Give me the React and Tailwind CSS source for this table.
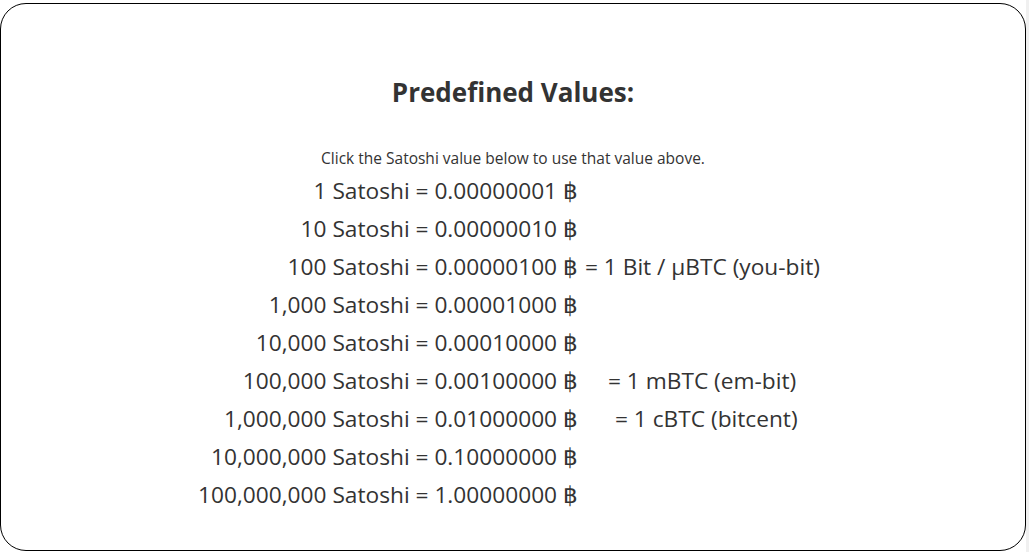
import React from 'react';

const rows = [
  { sat: '1', btc: '0.00000001' },
  { sat: '10', btc: '0.00000010' },
  { sat: '100', btc: '0.00000100', note: '= 1 Bit / μBTC (you-bit)', gap: 'ml-[7px]' },
  { sat: '1,000', btc: '0.00001000' },
  { sat: '10,000', btc: '0.00010000' },
  { sat: '100,000', btc: '0.00100000', note: '= 1 mBTC (em-bit)', gap: 'ml-[30px]' },
  { sat: '1,000,000', btc: '0.01000000', note: '= 1 cBTC (bitcent)', gap: 'ml-[37px]' },
  { sat: '10,000,000', btc: '0.10000000' },
  { sat: '100,000,000', btc: '1.00000000' },
];

function App() {
  return (
    <div className="flex h-[552px] w-[1029px] overflow-hidden bg-white font-['Open_Sans',sans-serif] text-[#333]">
      <div className="mt-[3px] h-[548px] w-[1026px] shrink-0 rounded-[26px] border border-black bg-white">
        <h2 className="mt-[70px] text-center text-[26px] font-bold leading-[36px]">Predefined Values:</h2>
        <p className="mt-[38px] text-center text-[15.5px] leading-[20px]">Click the Satoshi value below to use that value above.</p>
        <div className="mt-[4px] flex flex-col">
          {rows.map((r) => (
            <div key={r.sat} className="flex h-[38px] items-center text-[22.7px]">
              <span className="w-[577px] shrink-0 whitespace-nowrap text-right">{r.sat} Satoshi = {r.btc} ฿</span>
              {r.note && <span className={`${r.gap} whitespace-nowrap`}>{r.note}</span>}
            </div>
          ))}
        </div>
      </div>
      <div className="flex-1 bg-[#f0f0f0]" />
    </div>
  );
}

export default App;
